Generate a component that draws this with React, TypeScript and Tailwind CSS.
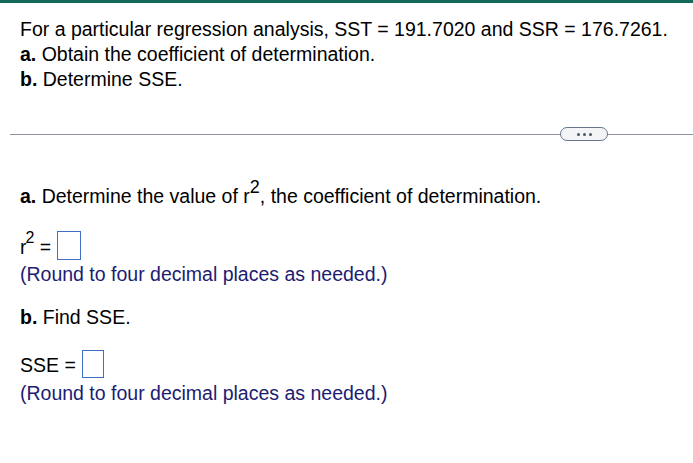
export default function App() {
  return (
    <div
      className="w-[693px] h-[463px] bg-white text-black overflow-hidden text-[19.5px] leading-[25px]"
      style={{ fontFamily: '"Liberation Sans", Arial, sans-serif' }}
    >
      <div className="h-[3px] bg-[#15695b]" />

      {/* question */}
      <div className="pl-[20px] pt-[14px]">
        <p>For a particular regression analysis, SST = 191.7020 and SSR = 176.7261.</p>
        <p>
          <b>a.</b> Obtain the coefficient of determination.
        </p>
        <p>
          <b>b.</b> Determine SSE.
        </p>
      </div>

      {/* divider */}
      <div className="flex items-center pl-[10px] mt-[35px] h-[14px]">
        <div className="flex-1 h-px bg-[#8d939b]" />
        <button className="w-[48px] h-[14px] rounded-full border border-[#66768c] bg-[#f3f4f6] flex items-center justify-center gap-[3px]">
          <span className="w-[3px] h-[3px] rounded-full bg-[#4b5563]" />
          <span className="w-[3px] h-[3px] rounded-full bg-[#4b5563]" />
          <span className="w-[3px] h-[3px] rounded-full bg-[#4b5563]" />
        </button>
        <div className="w-[85px] h-px bg-[#8d939b]" />
      </div>

      {/* answers */}
      <div className="pl-[20px] pt-[43px]">
        <p>
          <b>a.</b> Determine the value of r<sup className="text-[18px] top-[-0.55em]">2</sup>, the coefficient of determination.
        </p>

        <div className="flex items-end mt-[22px]">
          <span>
            r<sup className="text-[16px] top-[-0.7em] -ml-[1px]">2</sup> =
          </span>
          <span className="ml-[6px] w-[24px] h-[29px] border border-[#3d6fc7]" />
        </div>
        <p className="text-[#1c1c72] mt-[2px]">(Round to four decimal places as needed.)</p>

        <p className="mt-[18px]">
          <b>b.</b> Find SSE.
        </p>

        <div className="flex items-end mt-[20px]">
          <span>SSE =</span>
          <span className="ml-[6px] w-[22px] h-[28px] border border-[#3d6fc7]" />
        </div>
        <p className="text-[#1c1c72] mt-[3px]">(Round to four decimal places as needed.)</p>
      </div>
    </div>
  );
}
